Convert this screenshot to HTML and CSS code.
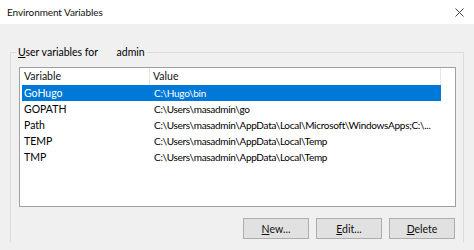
FILE: index.html
```html
<!DOCTYPE html>
<html>
<head>
<meta charset="utf-8">
<link rel="stylesheet" href="styles.css">
</head>
<body>
<div class="window">
  <div class="titlebar">
    <span class="title">Environment Variables</span>
    <svg class="close" width="9" height="9" viewBox="0 0 9 9"><path d="M0.5 0.5 L8.5 8.5 M8.5 0.5 L0.5 8.5" stroke="#444" stroke-width="1" fill="none"/></svg>
  </div>
  <div class="content">
    <fieldset class="group">
      <legend class="caption"><u>U</u>ser variables for <span class="user">admin</span></legend>
      <div class="list">
        <div class="header">
          <div class="hcell c1">Variable</div>
          <div class="hcell c2">Value</div>
        </div>
        <div class="row selected"><div class="cell c1">GoHugo</div><div class="cell c2">C:\Hugo\bin</div></div>
        <div class="row"><div class="cell c1">GOPATH</div><div class="cell c2">C:\Users\masadmin\go</div></div>
        <div class="row"><div class="cell c1">Path</div><div class="cell c2">C:\Users\masadmin\AppData\Local\Microsoft\WindowsApps;C:\...</div></div>
        <div class="row"><div class="cell c1">TEMP</div><div class="cell c2">C:\Users\masadmin\AppData\Local\Temp</div></div>
        <div class="row"><div class="cell c1">TMP</div><div class="cell c2">C:\Users\masadmin\AppData\Local\Temp</div></div>
      </div>
      <div class="buttons">
        <button class="btn"><u>N</u>ew...</button>
        <button class="btn"><u>E</u>dit...</button>
        <button class="btn"><u>D</u>elete</button>
      </div>
    </fieldset>
  </div>
</div>
</body>
</html>
```

FILE: styles.css
```css
html, body {
  margin: 0;
  padding: 0;
}
body {
  width: 474px;
  height: 250px;
  overflow: hidden;
  background: #f0f0f0;
  font-family: Lato, "Noto Sans", sans-serif;
  font-size: 10.5px;
  color: #000;
}
.window {
  width: 474px;
  height: 250px;
  overflow: hidden;
}
.titlebar {
  height: 24px;
  background: #fff;
  display: flex;
  align-items: center;
  justify-content: space-between;
  padding: 0 10px 0 7px;
  box-sizing: border-box;
}
.title {
  font-size: 10px;
  letter-spacing: -0.1px;
  color: #111;
}
.close {
  display: block;
}
.content {
  padding: 20px 0 0 10px;
}
.group {
  margin: 0;
  width: 454px;
  box-sizing: border-box;
  height: 199px;
  border: 1px solid #dcdcdc;
  border-bottom-color: transparent;
  padding: 7px 8px 0 8px;
  min-width: 0;
}
.caption {
  padding: 0 2px;
  margin-left: -3px;
  line-height: 16px;
}
.user {
  margin-left: 16px;
}
.list {
  width: 437px;
  height: 140px;
  box-sizing: border-box;
  background: #fff;
  border: 1px solid #a0a0a0;
  padding: 0 14px 0 2px;
}
.header {
  display: flex;
  height: 17px;
  align-items: center;
}
.hcell {
  height: 17px;
  line-height: 17px;
  box-sizing: border-box;
  color: #111;
}
.hcell.c1 {
  width: 128px;
  padding-left: 2px;
  border-right: 1px solid #e5e5e5;
}
.hcell.c2 {
  flex: 1;
  padding-left: 3px;
  border-right: 1px solid #e5e5e5;
}
.row {
  display: flex;
  height: 16px;
  line-height: 16px;
  white-space: nowrap;
}
.row .c1 {
  width: 128px;
  padding-left: 2px;
  box-sizing: border-box;
}
.row .c2 {
  flex: 1;
  padding-left: 4px;
  overflow: hidden;
  font-size: 10px;
  letter-spacing: -0.3px;
}
.row.selected {
  background: #0078d7;
  color: #fff;
}
.buttons {
  display: flex;
  justify-content: flex-end;
  gap: 7px;
  margin-top: 11px;
}
.btn {
  width: 66px;
  height: 21px;
  background: #e1e1e1;
  border: 1px solid #adadad;
  font-family: Lato, "Noto Sans", sans-serif;
  font-size: 10.5px;
  color: #111;
  padding: 0;
  margin: 0;
}
```
